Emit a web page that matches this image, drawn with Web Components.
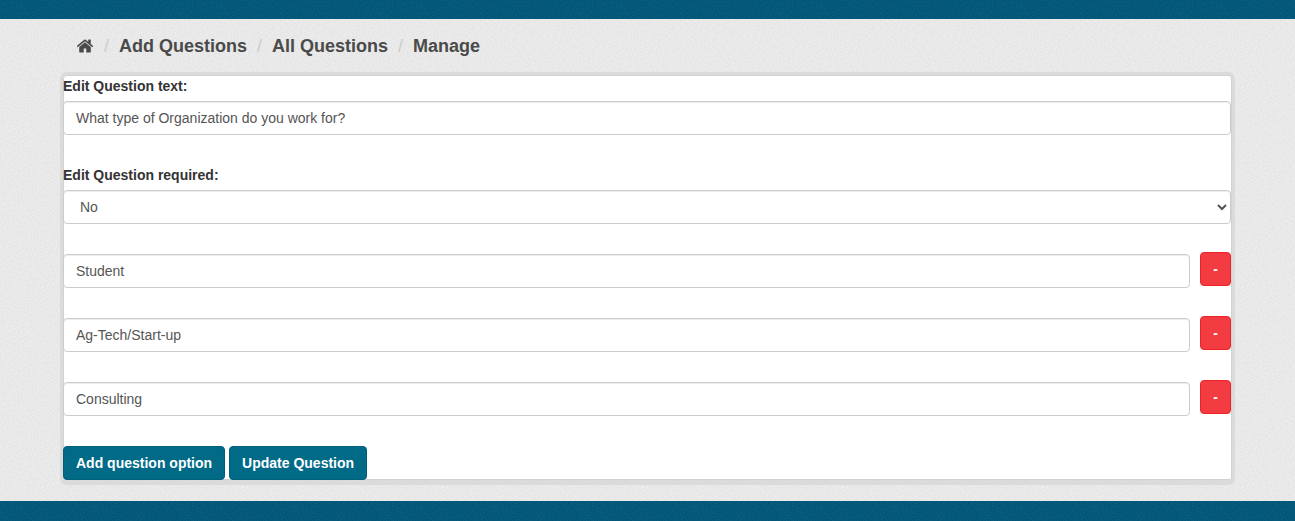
<!DOCTYPE html>
<html lang="en">
<head>
<meta charset="utf-8">
<title>Manage Question</title>
<style>
html,body{margin:0;padding:0;height:100%}
body{font-family:"Liberation Sans",Arial,sans-serif;font-size:14px;color:#333;background-color:#e4e4e4;
background-image:url("data:image/svg+xml,%3Csvg xmlns='http://www.w3.org/2000/svg' width='200' height='200'%3E%3Cfilter id='n'%3E%3CfeTurbulence type='fractalNoise' baseFrequency='.8' numOctaves='2'/%3E%3CfeColorMatrix values='0 0 0 0 1 0 0 0 0 1 0 0 0 0 1 0 0 0 .9 -.28'/%3E%3C/filter%3E%3Crect width='200' height='200' filter='url(%23n)'/%3E%3C/svg%3E");}
</style>
</head>
<body>
<app-page>
  <app-bar slot="top"></app-bar>
  <app-breadcrumb>
    <crumb-item home></crumb-item>
    <crumb-item>Add Questions</crumb-item>
    <crumb-item>All Questions</crumb-item>
    <crumb-item>Manage</crumb-item>
  </app-breadcrumb>
  <app-panel>
    <form-field label="Edit Question text:"><text-box value="What type of Organization do you work for?"></text-box></form-field>
    <form-field label="Edit Question required:"><select-box value="No"></select-box></form-field>
    <option-row value="Student"></option-row>
    <option-row value="Ag-Tech/Start-up"></option-row>
    <option-row value="Consulting"></option-row>
    <action-bar>
      <teal-button>Add question option</teal-button>
      <teal-button>Update Question</teal-button>
    </action-bar>
  </app-panel>
  <app-bar slot="bottom"></app-bar>
</app-page>
<script>
function define(name, html, extra){
  class C extends HTMLElement{
    constructor(){super();const r=this.attachShadow({mode:'open'});r.innerHTML=html;}
    connectedCallback(){ if(extra) extra(this); }
  }
  customElements.define(name,C);
}
const BAR_NOISE = "url(\"data:image/svg+xml,%3Csvg xmlns='http://www.w3.org/2000/svg' width='200' height='200'%3E%3Cfilter id='n'%3E%3CfeTurbulence type='fractalNoise' baseFrequency='.8' numOctaves='2'/%3E%3CfeColorMatrix values='0 0 0 0 1 0 0 0 0 1 0 0 0 0 1 0 0 0 .14 -.05'/%3E%3C/filter%3E%3Crect width='200' height='200' filter='url(%23n)'/%3E%3C/svg%3E\")";
define('app-page',`<style>
:host{display:flex;flex-direction:column;height:521px;overflow:hidden}
::slotted(app-bar[slot=top]){height:19px}
::slotted(app-bar[slot=bottom]){height:20px;margin-top:auto}
.main{display:flex;flex-direction:column;padding:0 60px}
</style><slot name="top"></slot><div class="main"><slot></slot></div><slot name="bottom"></slot>`);
define('app-bar',`<style>:host{display:block;flex:none;background-color:#005578;background-image:${BAR_NOISE}}</style>`);
define('app-breadcrumb',`<style>:host{display:flex;align-items:center;height:53px;padding-left:16px;box-sizing:border-box;font-size:18px;font-weight:bold;color:#4a4a4a;padding-top:1px}</style><slot></slot>`);
define('crumb-item',`<style>
:host{display:flex;align-items:center}
:host(:not([home]))::before{content:"/";font-weight:normal;color:#ccc;padding:0 10px 0 10px;}
svg{display:block;width:18px;height:18px;fill:#4a4a4a}
:host(:not([home])) svg{display:none}
:host([home]) slot{display:none}
</style><svg viewBox="0 0 1792 1792" aria-hidden="true"><path d="M1472 992v480q0 26-19 45t-45 19h-384v-384h-256v384h-384q-26 0-45-19t-19-45v-480q0-1 .5-3t.5-3l575-474 575 474q1 2 1 6zm223-69l-62 74q-8 9-21 11h-3q-13 0-21-7l-692-577-692 577q-12 8-24 7-13-2-21-11l-62-74q-8-10-7-23.5t11-21.5l719-599q32-26 76-26t76 26l244 204v-195q0-14 9-23t23-9h192q14 0 23 9t9 23v408l219 182q10 8 11 21.5t-7 23.5z"/></svg><slot></slot>`);
define('app-panel',`<style>
:host{display:flex;flex-direction:column;gap:28px;width:1169px;box-sizing:content-box;background:#fff;border:3px solid #dbdbdb;border-bottom-width:5px;border-radius:7px;background-clip:padding-box;box-shadow:inset 0 0 0 1px #d2d2d2}
</style><slot></slot>`);
define('form-field',`<style>
:host{display:block;padding-top:1px;margin-right:1px}
:host(:nth-of-type(2)){margin-top:1px}
label{display:block;font-weight:bold;line-height:20px;margin-bottom:5px;color:#333}
</style><label></label><slot></slot>`, el=>{el.shadowRoot.querySelector('label').textContent=el.getAttribute('label');});
const FIELD=`box-sizing:border-box;width:100%;height:34px;border:1px solid #ccc;border-radius:4px;background:#fff;font:14px "Liberation Sans",Arial,sans-serif;color:#555;padding:6px 12px;display:block;margin:0;box-shadow:inset 0 1px 1px rgba(0,0,0,.075)`;
define('text-box',`<style>:host{display:block}input{${FIELD}}</style><input type="text">`, el=>{el.shadowRoot.querySelector('input').setAttribute('value',el.getAttribute('value'));});
define('select-box',`<style>:host{display:block}select{${FIELD}}</style><select><option>No</option><option>Yes</option></select>`);
define('option-row',`<style>
:host{display:flex;align-items:flex-start;gap:10px;margin-right:1px}
text-box{flex:1;margin-top:2px}
button{flex:none;width:31px;height:34px;box-sizing:border-box;background:#f33c41;border:1px solid #ee2127;border-radius:4px;color:#fff;font:bold 14px "Liberation Sans",Arial,sans-serif;padding:0;margin:0}
</style><text-box></text-box><button type="button">-</button>`, el=>{
  const t=el.shadowRoot.querySelector('text-box');
  t.setAttribute('value',el.getAttribute('value'));
  t.shadowRoot.querySelector('input').setAttribute('value',el.getAttribute('value'));
});
define('action-bar',`<style>:host{display:flex;gap:4px;margin-top:2px}</style><slot></slot>`);
define('teal-button',`<style>
:host{display:block}
button{display:block;height:34px;box-sizing:border-box;background:#006a87;border:1px solid #005f7a;border-radius:4px;color:#fff;font:bold 14px "Liberation Sans",Arial,sans-serif;padding:0 12px;margin:0}
</style><button type="button"><slot></slot></button>`);
</script>
</body>
</html>
